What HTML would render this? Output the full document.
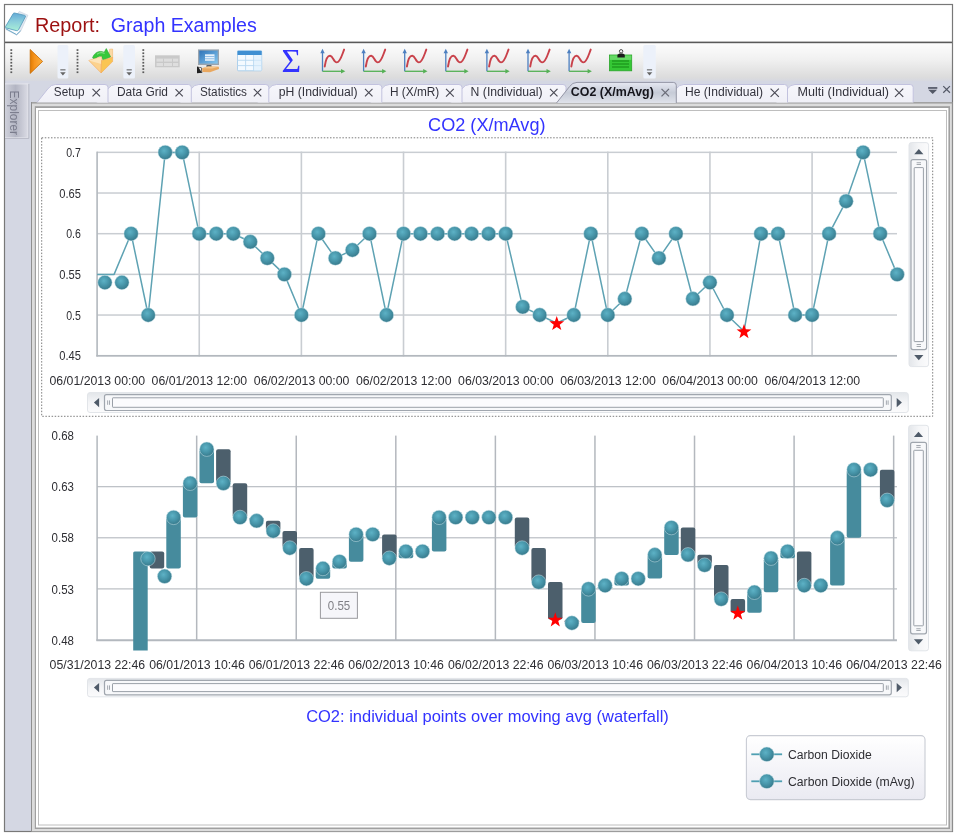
<!DOCTYPE html>
<html lang="en"><head><meta charset="utf-8"><title>Report: Graph Examples</title>
<style>
html,body{margin:0;padding:0;background:#fff;overflow:hidden}
svg{display:block;filter:blur(0.35px)}
text{font-family:"Liberation Sans",sans-serif}
</style></head><body>
<svg width="960" height="837" viewBox="0 0 960 837">
<defs>
<radialGradient id="ball" cx="0.42" cy="0.38" r="0.62"><stop offset="0" stop-color="#5db2c6"/><stop offset="0.55" stop-color="#4795a9"/><stop offset="1" stop-color="#387b8d"/></radialGradient>
<linearGradient id="tb" x1="0" y1="0" x2="0" y2="1"><stop offset="0" stop-color="#fdfdfd"/><stop offset="0.45" stop-color="#f0f0f0"/><stop offset="0.9" stop-color="#dcdcdc"/><stop offset="1" stop-color="#d6d8e0"/></linearGradient>
<linearGradient id="acttab" x1="0" y1="0" x2="0" y2="1"><stop offset="0" stop-color="#e6e8f2"/><stop offset="0.5" stop-color="#c6cbd7"/><stop offset="1" stop-color="#dfe2ea"/></linearGradient>
<linearGradient id="tab" x1="0" y1="0" x2="0" y2="1"><stop offset="0" stop-color="#f6f6fb"/><stop offset="1" stop-color="#f0f0f7"/></linearGradient>
<linearGradient id="expl" x1="0" y1="0" x2="1" y2="0"><stop offset="0" stop-color="#cfd1db"/><stop offset="0.45" stop-color="#b3b5c3"/><stop offset="1" stop-color="#dcdde6"/></linearGradient>
<linearGradient id="sbv" x1="0" y1="0" x2="1" y2="0"><stop offset="0" stop-color="#e3e6ea"/><stop offset="0.5" stop-color="#f4f5f7"/><stop offset="1" stop-color="#fbfbfc"/></linearGradient>
<linearGradient id="sbh" x1="0" y1="0" x2="0" y2="1"><stop offset="0" stop-color="#e3e6ea"/><stop offset="0.5" stop-color="#f4f5f7"/><stop offset="1" stop-color="#fbfbfc"/></linearGradient>
<linearGradient id="leg" x1="0" y1="0" x2="0" y2="1"><stop offset="0" stop-color="#ffffff"/><stop offset="1" stop-color="#eaeaf2"/></linearGradient>
<linearGradient id="play" x1="0" y1="0" x2="1" y2="0"><stop offset="0" stop-color="#e07a00"/><stop offset="0.35" stop-color="#f7941d"/><stop offset="1" stop-color="#fbb040"/></linearGradient>
<linearGradient id="mon" x1="0" y1="0" x2="1" y2="1"><stop offset="0" stop-color="#2f73b8"/><stop offset="1" stop-color="#86c8f0"/></linearGradient>
<linearGradient id="book" x1="0" y1="0" x2="0" y2="1"><stop offset="0" stop-color="#62a9d6"/><stop offset="0.5" stop-color="#8ccfdc"/><stop offset="1" stop-color="#a9efd6"/></linearGradient>
<linearGradient id="fold" x1="0" y1="0" x2="1" y2="0"><stop offset="0" stop-color="#fbc56a"/><stop offset="0.5" stop-color="#f7a531"/><stop offset="1" stop-color="#f9b95a"/></linearGradient>
</defs>
<rect x="0" y="0" width="960" height="837" fill="#fff"/>
<rect x="5" y="43" width="947" height="788" fill="#d4d7e3"/>
<rect x="5" y="5" width="947" height="37" fill="#fff"/>
<rect x="5" y="43" width="947" height="38" fill="url(#tb)"/>
<rect x="4" y="41.6" width="949" height="1.6" fill="#5a5a5a"/>
<rect x="4.5" y="4.5" width="948" height="827" fill="none" stroke="#787878" stroke-width="1.2"/>
<text x="35" y="31.5" font-size="19.6" fill="#9c1010" textLength="65" lengthAdjust="spacingAndGlyphs">Report:</text>
<text x="110.8" y="31.5" font-size="19.6" fill="#3333ff" textLength="146" lengthAdjust="spacingAndGlyphs">Graph Examples</text>
<g><path d="M19.3 11.4 L27.9 15.2 L20.8 31 L16.8 35.2 L6 29.6 Z" fill="#e3e9f1" stroke="#c4cedb" stroke-width="0.6" stroke-linejoin="round"/><path d="M5.6 28.6 L16.6 34.6 L20.6 30.8" fill="#fbfdff" stroke="#5d9fc2" stroke-width="0.9" stroke-linejoin="round"/><path d="M14.6 13 L24.9 15.4 Q25.9 15.8 25.4 16.8 L18.6 29.6 Q17.8 31 16.2 30.6 L6 27.9 Q5 27.5 5.5 26.6 L13.2 13.6 Q13.8 12.8 14.6 13 Z" fill="url(#book)" stroke="#4f97ba" stroke-width="0.8" stroke-linejoin="round"/></g>
<rect x="10.4" y="49.20" width="1.8" height="1.7" fill="#5a5a5a"/>
<rect x="10.4" y="52.37" width="1.8" height="1.7" fill="#5a5a5a"/>
<rect x="10.4" y="55.54" width="1.8" height="1.7" fill="#5a5a5a"/>
<rect x="10.4" y="58.71" width="1.8" height="1.7" fill="#5a5a5a"/>
<rect x="10.4" y="61.88" width="1.8" height="1.7" fill="#5a5a5a"/>
<rect x="10.4" y="65.05" width="1.8" height="1.7" fill="#5a5a5a"/>
<rect x="10.4" y="68.22" width="1.8" height="1.7" fill="#5a5a5a"/>
<rect x="10.4" y="71.39" width="1.8" height="1.7" fill="#5a5a5a"/>
<rect x="76.6" y="49.20" width="1.8" height="1.7" fill="#5a5a5a"/>
<rect x="76.6" y="52.37" width="1.8" height="1.7" fill="#5a5a5a"/>
<rect x="76.6" y="55.54" width="1.8" height="1.7" fill="#5a5a5a"/>
<rect x="76.6" y="58.71" width="1.8" height="1.7" fill="#5a5a5a"/>
<rect x="76.6" y="61.88" width="1.8" height="1.7" fill="#5a5a5a"/>
<rect x="76.6" y="65.05" width="1.8" height="1.7" fill="#5a5a5a"/>
<rect x="76.6" y="68.22" width="1.8" height="1.7" fill="#5a5a5a"/>
<rect x="76.6" y="71.39" width="1.8" height="1.7" fill="#5a5a5a"/>
<rect x="142.4" y="49.20" width="1.8" height="1.7" fill="#5a5a5a"/>
<rect x="142.4" y="52.37" width="1.8" height="1.7" fill="#5a5a5a"/>
<rect x="142.4" y="55.54" width="1.8" height="1.7" fill="#5a5a5a"/>
<rect x="142.4" y="58.71" width="1.8" height="1.7" fill="#5a5a5a"/>
<rect x="142.4" y="61.88" width="1.8" height="1.7" fill="#5a5a5a"/>
<rect x="142.4" y="65.05" width="1.8" height="1.7" fill="#5a5a5a"/>
<rect x="142.4" y="68.22" width="1.8" height="1.7" fill="#5a5a5a"/>
<rect x="142.4" y="71.39" width="1.8" height="1.7" fill="#5a5a5a"/>
<rect x="57.5" y="45" width="10.799999999999997" height="33.5" rx="1.5" fill="#ecf1fa"/>
<rect x="60.3" y="69.3" width="5.2" height="1.1" fill="#666"/>
<path d="M60.1 72.2 L65.7 72.2 L62.9 75.4 Z" fill="#666"/>
<rect x="123.3" y="45" width="11.700000000000003" height="33.5" rx="1.5" fill="#ecf1fa"/>
<rect x="126.6" y="69.3" width="5.2" height="1.1" fill="#666"/>
<path d="M126.4 72.2 L132.0 72.2 L129.2 75.4 Z" fill="#666"/>
<rect x="643.3" y="45" width="12.5" height="33.5" rx="1.5" fill="#ecf1fa"/>
<rect x="646.9" y="69.3" width="5.2" height="1.1" fill="#666"/>
<path d="M646.8 72.2 L652.3 72.2 L649.5 75.4 Z" fill="#666"/>
<path d="M30.2 49.5 L42.6 61.4 L30.2 73.4 Z" fill="url(#play)" stroke="#c86a00" stroke-width="0.8" stroke-linejoin="round"/>
<g><path d="M109.6 49.2 L112.6 49 L112.6 58 L109.2 57.6 Z" fill="#fbd9a4" stroke="#f3b060" stroke-width="0.5"/><path d="M92.6 58 C94 52.6 99.5 50 104.2 52.3 L106.3 48.6 L110.6 56.8 L103.2 60.6 L101.5 56.4 C99 55.6 96.5 56.8 95.6 59.6 Z" fill="#35c83a" stroke="#2fa834" stroke-width="0.6" stroke-linejoin="round"/><path d="M97 54.2 C99.5 52.4 102.5 52.4 104.6 53.6" stroke="#8be58e" stroke-width="1.1" fill="none" opacity="0.8"/><path d="M88.8 60.5 L101.5 56.8 L101.1 72.9 Z" fill="#fcd28e" stroke="#f3a85a" stroke-width="0.6" stroke-linejoin="round"/><path d="M88.8 60.5 L101.5 56.8 L101.3 64 Z" fill="#fde9c6" opacity="0.8"/><path d="M101.5 60.4 L112.6 57.4 L112.6 61.6 L101.1 72.9 Z" fill="#fac552" stroke="#f3a85a" stroke-width="0.6" stroke-linejoin="round"/></g>
<g><rect x="155" y="55.3" width="24.7" height="12" fill="#c9c9c9"/><rect x="156.5" y="58.6" width="21.7" height="3" fill="#dedede"/><rect x="156.5" y="63" width="21.7" height="3" fill="#dedede"/><rect x="163" y="58.6" width="1" height="7.4" fill="#c9c9c9"/><rect x="172" y="58.6" width="1" height="7.4" fill="#c9c9c9"/></g>
<g><rect x="198" y="49.4" width="21" height="15.6" fill="#9aa4ae"/><rect x="199.3" y="50.6" width="18.4" height="13" fill="url(#mon)"/><rect x="205" y="54.3" width="9.5" height="6.5" fill="#e6f1fb"/><rect x="205" y="56.2" width="9.5" height="0.8" fill="#7fb2e0"/><rect x="205" y="58.4" width="9.5" height="0.8" fill="#7fb2e0"/><rect x="206.5" y="65" width="5" height="2" fill="#55606a"/><path d="M202 68.2 L208 66.4 L218.8 66.8 L219 69 L210 72.3 L202.5 72 Z" fill="#e9a860"/><path d="M202 68.2 L208 66.4 L218.8 66.8 L212 68.6 Z" fill="#f6c78e"/><path d="M197 66.5 L201.5 67.5 L202.3 72.8 L197 73.3 Z" fill="#222"/><path d="M198.5 67.3 L201 68 L201.6 72.2 Z" fill="#eee"/></g>
<g><rect x="237.5" y="50.8" width="24.2" height="20" rx="1" fill="#f4faff" stroke="#9cc6e8" stroke-width="0.8"/><rect x="237.5" y="50.8" width="24.2" height="4.2" fill="#3f8fd2"/><rect x="245.2" y="55" width="0.9" height="15.8" fill="#b7d8f0"/><rect x="253.2" y="55" width="0.9" height="15.8" fill="#b7d8f0"/><rect x="237.5" y="59.8" width="24.2" height="0.9" fill="#b7d8f0"/><rect x="237.5" y="65.2" width="24.2" height="0.9" fill="#b7d8f0"/><rect x="254.1" y="55" width="7.6" height="15.8" fill="#dceefb" opacity="0.6"/></g>
<text x="281.6" y="72.4" style="font-family:'Liberation Serif',serif" font-size="33.5" fill="#3333ff" textLength="19.6" lengthAdjust="spacingAndGlyphs">Σ</text>
<g transform="translate(322.5,0)"><path d="M0 71.3 L0 52" stroke="#4c7fc0" stroke-width="1.3" fill="none"/><path d="M-2.2 53.2 L0 48.8 L2.2 53.2 Z" fill="#4c7fc0"/><path d="M0 71.3 L19.5 71.3" stroke="#55b055" stroke-width="1.3" fill="none"/><path d="M18.5 69.1 L22.8 71.3 L18.5 73.5 Z" fill="#55b055"/><path d="M2.2 66.5 C3.2 60 5 55.6 7.6 55.8 C10.6 56 11 62.3 14.2 62.4 C17.6 62.5 19.5 55 21.6 49.6" stroke="#c9414a" stroke-width="1.9" fill="none" stroke-linecap="round"/></g>
<g transform="translate(363.6,0)"><path d="M0 71.3 L0 52" stroke="#4c7fc0" stroke-width="1.3" fill="none"/><path d="M-2.2 53.2 L0 48.8 L2.2 53.2 Z" fill="#4c7fc0"/><path d="M0 71.3 L19.5 71.3" stroke="#55b055" stroke-width="1.3" fill="none"/><path d="M18.5 69.1 L22.8 71.3 L18.5 73.5 Z" fill="#55b055"/><path d="M2.2 66.5 C3.2 60 5 55.6 7.6 55.8 C10.6 56 11 62.3 14.2 62.4 C17.6 62.5 19.5 55 21.6 49.6" stroke="#c9414a" stroke-width="1.9" fill="none" stroke-linecap="round"/></g>
<g transform="translate(404.7,0)"><path d="M0 71.3 L0 52" stroke="#4c7fc0" stroke-width="1.3" fill="none"/><path d="M-2.2 53.2 L0 48.8 L2.2 53.2 Z" fill="#4c7fc0"/><path d="M0 71.3 L19.5 71.3" stroke="#55b055" stroke-width="1.3" fill="none"/><path d="M18.5 69.1 L22.8 71.3 L18.5 73.5 Z" fill="#55b055"/><path d="M2.2 66.5 C3.2 60 5 55.6 7.6 55.8 C10.6 56 11 62.3 14.2 62.4 C17.6 62.5 19.5 55 21.6 49.6" stroke="#c9414a" stroke-width="1.9" fill="none" stroke-linecap="round"/></g>
<g transform="translate(445.8,0)"><path d="M0 71.3 L0 52" stroke="#4c7fc0" stroke-width="1.3" fill="none"/><path d="M-2.2 53.2 L0 48.8 L2.2 53.2 Z" fill="#4c7fc0"/><path d="M0 71.3 L19.5 71.3" stroke="#55b055" stroke-width="1.3" fill="none"/><path d="M18.5 69.1 L22.8 71.3 L18.5 73.5 Z" fill="#55b055"/><path d="M2.2 66.5 C3.2 60 5 55.6 7.6 55.8 C10.6 56 11 62.3 14.2 62.4 C17.6 62.5 19.5 55 21.6 49.6" stroke="#c9414a" stroke-width="1.9" fill="none" stroke-linecap="round"/></g>
<g transform="translate(486.9,0)"><path d="M0 71.3 L0 52" stroke="#4c7fc0" stroke-width="1.3" fill="none"/><path d="M-2.2 53.2 L0 48.8 L2.2 53.2 Z" fill="#4c7fc0"/><path d="M0 71.3 L19.5 71.3" stroke="#55b055" stroke-width="1.3" fill="none"/><path d="M18.5 69.1 L22.8 71.3 L18.5 73.5 Z" fill="#55b055"/><path d="M2.2 66.5 C3.2 60 5 55.6 7.6 55.8 C10.6 56 11 62.3 14.2 62.4 C17.6 62.5 19.5 55 21.6 49.6" stroke="#c9414a" stroke-width="1.9" fill="none" stroke-linecap="round"/></g>
<g transform="translate(528.0,0)"><path d="M0 71.3 L0 52" stroke="#4c7fc0" stroke-width="1.3" fill="none"/><path d="M-2.2 53.2 L0 48.8 L2.2 53.2 Z" fill="#4c7fc0"/><path d="M0 71.3 L19.5 71.3" stroke="#55b055" stroke-width="1.3" fill="none"/><path d="M18.5 69.1 L22.8 71.3 L18.5 73.5 Z" fill="#55b055"/><path d="M2.2 66.5 C3.2 60 5 55.6 7.6 55.8 C10.6 56 11 62.3 14.2 62.4 C17.6 62.5 19.5 55 21.6 49.6" stroke="#c9414a" stroke-width="1.9" fill="none" stroke-linecap="round"/></g>
<g transform="translate(569.1,0)"><path d="M0 71.3 L0 52" stroke="#4c7fc0" stroke-width="1.3" fill="none"/><path d="M-2.2 53.2 L0 48.8 L2.2 53.2 Z" fill="#4c7fc0"/><path d="M0 71.3 L19.5 71.3" stroke="#55b055" stroke-width="1.3" fill="none"/><path d="M18.5 69.1 L22.8 71.3 L18.5 73.5 Z" fill="#55b055"/><path d="M2.2 66.5 C3.2 60 5 55.6 7.6 55.8 C10.6 56 11 62.3 14.2 62.4 C17.6 62.5 19.5 55 21.6 49.6" stroke="#c9414a" stroke-width="1.9" fill="none" stroke-linecap="round"/></g>
<g><rect x="609.5" y="55" width="22.2" height="15.8" fill="#35c835" stroke="#28a428" stroke-width="0.8"/><rect x="609.9" y="55.4" width="21.4" height="4.5" fill="#7be07b" opacity="0.7"/><rect x="612" y="60.3" width="17" height="1.4" fill="#1f9a1f"/><rect x="612" y="63.3" width="17" height="1.4" fill="#1f9a1f"/><rect x="612" y="66.3" width="17" height="1.4" fill="#1f9a1f"/><path d="M617.4 57.6 L617.4 54.8 L619.4 53.6 L622.8 53.6 L624.8 54.8 L624.8 57.6 Z" fill="#1a1a1a"/><circle cx="621.1" cy="51.3" r="1.7" fill="none" stroke="#333" stroke-width="0.9"/></g>
<rect x="5" y="83.5" width="23.5" height="54.6" fill="url(#expl)"/>
<path d="M5 83.9 L28.1 83.9 L28.1 137.8 L5 137.8" fill="none" stroke="#e6e7ee" stroke-width="1"/>
<path d="M28.8 84 L28.8 138.4 L5 138.4" fill="none" stroke="#aeb0bc" stroke-width="0.8"/>
<text transform="translate(10.3,90.6) rotate(90)" font-size="12.6" fill="#7a7c8c" textLength="44.4" lengthAdjust="spacingAndGlyphs">Explorer</text>
<rect x="31" y="102" width="921.5" height="729.5" fill="#a2a2a2"/>
<rect x="32" y="103.6" width="919.8" height="727.6" fill="#dcdcdc"/>
<rect x="34.8" y="106.2" width="915.2" height="722.8" fill="#a0a0a0"/>
<rect x="36" y="108" width="912.4" height="719.5" fill="#ffffff"/>
<rect x="38.5" y="110.5" width="908" height="714.5" fill="#ffffff" stroke="#bebebe" stroke-width="1"/>
<rect x="31" y="102" width="1" height="729" fill="#8f8f8f"/>
<path d="M776.5 102.4 L787.5 88.7 Q790.5 84.5 795.0 84.5 L910.2 84.5 Q913.2 84.5 913.2 87.5 L913.2 102.4 Z" fill="url(#tab)"/>
<path d="M776.5 102.4 L787.5 88.7 Q790.5 84.5 795.0 84.5 L910.2 84.5 Q913.2 84.5 913.2 87.5 L913.2 102.4" fill="none" stroke="#c2c2de" stroke-width="1"/>
<text x="797.5" y="96.3" font-size="12" fill="#33333d" textLength="91.5" lengthAdjust="spacingAndGlyphs">Multi (Individual)</text>
<path d="M894.96 88.56 L903.24 96.84 M903.24 88.56 L894.96 96.84" stroke="#4a4a55" stroke-width="1.15" fill="none"/>
<path d="M665.3 102.4 L676.3 88.7 Q679.3 84.5 683.8 84.5 L784.5 84.5 Q787.5 84.5 787.5 87.5 L787.5 102.4 Z" fill="url(#tab)"/>
<path d="M665.3 102.4 L676.3 88.7 Q679.3 84.5 683.8 84.5 L784.5 84.5 Q787.5 84.5 787.5 87.5 L787.5 102.4" fill="none" stroke="#c2c2de" stroke-width="1"/>
<text x="685" y="96.3" font-size="12" fill="#33333d" textLength="78" lengthAdjust="spacingAndGlyphs">He (Individual)</text>
<path d="M770.56 88.56 L778.84 96.84 M778.84 88.56 L770.56 96.84" stroke="#4a4a55" stroke-width="1.15" fill="none"/>
<path d="M451.0 102.4 L462.0 88.7 Q465.0 84.5 469.5 84.5 L563.0 84.5 Q566.0 84.5 566.0 87.5 L566.0 102.4 Z" fill="url(#tab)"/>
<path d="M451.0 102.4 L462.0 88.7 Q465.0 84.5 469.5 84.5 L563.0 84.5 Q566.0 84.5 566.0 87.5 L566.0 102.4" fill="none" stroke="#c2c2de" stroke-width="1"/>
<text x="470.6" y="96.3" font-size="12" fill="#33333d" textLength="72" lengthAdjust="spacingAndGlyphs">N (Individual)</text>
<path d="M550.01 88.96 L557.49 96.44 M557.49 88.96 L550.01 96.44" stroke="#4a4a55" stroke-width="1.15" fill="none"/>
<path d="M370.8 102.4 L381.8 88.7 Q384.8 84.5 389.3 84.5 L459.0 84.5 Q462.0 84.5 462.0 87.5 L462.0 102.4 Z" fill="url(#tab)"/>
<path d="M370.8 102.4 L381.8 88.7 Q384.8 84.5 389.3 84.5 L459.0 84.5 Q462.0 84.5 462.0 87.5 L462.0 102.4" fill="none" stroke="#c2c2de" stroke-width="1"/>
<text x="390" y="96.3" font-size="12" fill="#33333d" textLength="49.3" lengthAdjust="spacingAndGlyphs">H (X/mR)</text>
<path d="M446.03 88.83 L453.77 96.57 M453.77 88.83 L446.03 96.57" stroke="#4a4a55" stroke-width="1.15" fill="none"/>
<path d="M257.8 102.4 L268.8 88.7 Q271.8 84.5 276.3 84.5 L378.8 84.5 Q381.8 84.5 381.8 87.5 L381.8 102.4 Z" fill="url(#tab)"/>
<path d="M257.8 102.4 L268.8 88.7 Q271.8 84.5 276.3 84.5 L378.8 84.5 Q381.8 84.5 381.8 87.5 L381.8 102.4" fill="none" stroke="#c2c2de" stroke-width="1"/>
<text x="278.8" y="96.3" font-size="12" fill="#33333d" textLength="78.7" lengthAdjust="spacingAndGlyphs">pH (Individual)</text>
<path d="M365.01 88.96 L372.49 96.44 M372.49 88.96 L365.01 96.44" stroke="#4a4a55" stroke-width="1.15" fill="none"/>
<path d="M180.3 102.4 L191.3 88.7 Q194.3 84.5 198.8 84.5 L265.8 84.5 Q268.8 84.5 268.8 87.5 L268.8 102.4 Z" fill="url(#tab)"/>
<path d="M180.3 102.4 L191.3 88.7 Q194.3 84.5 198.8 84.5 L265.8 84.5 Q268.8 84.5 268.8 87.5 L268.8 102.4" fill="none" stroke="#c2c2de" stroke-width="1"/>
<text x="200" y="96.3" font-size="12" fill="#33333d" textLength="47" lengthAdjust="spacingAndGlyphs">Statistics</text>
<path d="M253.81 88.96 L261.29 96.44 M261.29 88.96 L253.81 96.44" stroke="#4a4a55" stroke-width="1.15" fill="none"/>
<path d="M97.0 102.4 L108.0 88.7 Q111.0 84.5 115.5 84.5 L188.3 84.5 Q191.3 84.5 191.3 87.5 L191.3 102.4 Z" fill="url(#tab)"/>
<path d="M97.0 102.4 L108.0 88.7 Q111.0 84.5 115.5 84.5 L188.3 84.5 Q191.3 84.5 191.3 87.5 L191.3 102.4" fill="none" stroke="#c2c2de" stroke-width="1"/>
<text x="117" y="96.3" font-size="12" fill="#33333d" textLength="51" lengthAdjust="spacingAndGlyphs">Data Grid</text>
<path d="M175.50 89.05 L182.80 96.35 M182.80 89.05 L175.50 96.35" stroke="#4a4a55" stroke-width="1.15" fill="none"/>
<path d="M37.0 102.4 L48.0 88.7 Q51.0 84.5 55.5 84.5 L105.0 84.5 Q108.0 84.5 108.0 87.5 L108.0 102.4 Z" fill="url(#tab)"/>
<path d="M37.0 102.4 L48.0 88.7 Q51.0 84.5 55.5 84.5 L105.0 84.5 Q108.0 84.5 108.0 87.5 L108.0 102.4" fill="none" stroke="#c2c2de" stroke-width="1"/>
<text x="53.8" y="96.3" font-size="12" fill="#33333d" textLength="30.7" lengthAdjust="spacingAndGlyphs">Setup</text>
<path d="M92.51 88.96 L99.99 96.44 M99.99 88.96 L92.51 96.44" stroke="#4a4a55" stroke-width="1.15" fill="none"/>
<path d="M556.5 103 L569.5 86.6 Q572.5 82.4 577.0 82.4 L673.3 82.4 Q676.3 82.4 676.3 85.4 L676.3 103 Z" fill="url(#acttab)"/>
<path d="M556.5 103 L569.5 86.6 Q572.5 82.4 577.0 82.4 L673.3 82.4 Q676.3 82.4 676.3 85.4 L676.3 103" fill="none" stroke="#9496a6" stroke-width="1"/>
<text x="570.8" y="96.3" font-size="12.2" font-weight="700" fill="#15151c" textLength="83" lengthAdjust="spacingAndGlyphs">CO2 (X/mAvg)</text>
<path d="M661.51 88.86 L668.99 96.34 M668.99 88.86 L661.51 96.34" stroke="#6a6c78" stroke-width="1.3" fill="none"/>
<rect x="928.1" y="87.1" width="9.2" height="1.7" fill="#535866"/><path d="M928.3 89.8 L937.1 89.8 L932.7 94.1 Z" fill="#535866"/>
<path d="M943.26 86.06 L949.94 92.74 M949.94 86.06 L943.26 92.74" stroke="#535866" stroke-width="1.2" fill="none"/>
<rect x="41.7" y="137.8" width="891" height="278.5" fill="none" stroke="#7d7d7d" stroke-width="1" stroke-dasharray="1.5 1.6"/>
<text x="486.8" y="130.5" font-size="18.4" fill="#3333ff" text-anchor="middle" textLength="117.4" lengthAdjust="spacingAndGlyphs">CO2 (X/mAvg)</text>
<rect x="97.1" y="151.60" width="799.9" height="1.5" fill="#c9cdd2"/>
<rect x="97.1" y="192.27" width="799.9" height="1.5" fill="#c9cdd2"/>
<rect x="97.1" y="232.94" width="799.9" height="1.5" fill="#c9cdd2"/>
<rect x="97.1" y="273.61" width="799.9" height="1.5" fill="#c9cdd2"/>
<rect x="97.1" y="314.28" width="799.9" height="1.5" fill="#c9cdd2"/>
<rect x="96.30" y="151.60" width="1.6" height="204.85" fill="#b3b8be"/>
<rect x="198.44" y="151.60" width="1.6" height="204.85" fill="#c9cdd2"/>
<rect x="300.58" y="151.60" width="1.6" height="204.85" fill="#c9cdd2"/>
<rect x="402.72" y="151.60" width="1.6" height="204.85" fill="#c9cdd2"/>
<rect x="504.86" y="151.60" width="1.6" height="204.85" fill="#c9cdd2"/>
<rect x="607.00" y="151.60" width="1.6" height="204.85" fill="#c9cdd2"/>
<rect x="709.14" y="151.60" width="1.6" height="204.85" fill="#c9cdd2"/>
<rect x="811.28" y="151.60" width="1.6" height="204.85" fill="#c9cdd2"/>
<rect x="96.3" y="354.95" width="800.7" height="1.75" fill="#b3b8be"/>
<text x="80.9" y="156.9" font-size="12.3" fill="#2e2e33" text-anchor="end" textLength="14.7" lengthAdjust="spacingAndGlyphs">0.7</text>
<text x="80.9" y="197.5" font-size="12.3" fill="#2e2e33" text-anchor="end" textLength="21.7" lengthAdjust="spacingAndGlyphs">0.65</text>
<text x="80.9" y="238.2" font-size="12.3" fill="#2e2e33" text-anchor="end" textLength="14.7" lengthAdjust="spacingAndGlyphs">0.6</text>
<text x="80.9" y="278.9" font-size="12.3" fill="#2e2e33" text-anchor="end" textLength="21.7" lengthAdjust="spacingAndGlyphs">0.55</text>
<text x="80.9" y="319.5" font-size="12.3" fill="#2e2e33" text-anchor="end" textLength="14.7" lengthAdjust="spacingAndGlyphs">0.5</text>
<text x="80.9" y="360.2" font-size="12.3" fill="#2e2e33" text-anchor="end" textLength="21.7" lengthAdjust="spacingAndGlyphs">0.45</text>
<text x="97.3" y="384.9" font-size="12.3" fill="#2e2e33" text-anchor="middle" textLength="95.6" lengthAdjust="spacingAndGlyphs">06/01/2013 00:00</text>
<text x="199.4" y="384.9" font-size="12.3" fill="#2e2e33" text-anchor="middle" textLength="95.6" lengthAdjust="spacingAndGlyphs">06/01/2013 12:00</text>
<text x="301.6" y="384.9" font-size="12.3" fill="#2e2e33" text-anchor="middle" textLength="95.6" lengthAdjust="spacingAndGlyphs">06/02/2013 00:00</text>
<text x="403.7" y="384.9" font-size="12.3" fill="#2e2e33" text-anchor="middle" textLength="95.6" lengthAdjust="spacingAndGlyphs">06/02/2013 12:00</text>
<text x="505.9" y="384.9" font-size="12.3" fill="#2e2e33" text-anchor="middle" textLength="95.6" lengthAdjust="spacingAndGlyphs">06/03/2013 00:00</text>
<text x="608.0" y="384.9" font-size="12.3" fill="#2e2e33" text-anchor="middle" textLength="95.6" lengthAdjust="spacingAndGlyphs">06/03/2013 12:00</text>
<text x="710.1" y="384.9" font-size="12.3" fill="#2e2e33" text-anchor="middle" textLength="95.6" lengthAdjust="spacingAndGlyphs">06/04/2013 00:00</text>
<text x="812.3" y="384.9" font-size="12.3" fill="#2e2e33" text-anchor="middle" textLength="95.6" lengthAdjust="spacingAndGlyphs">06/04/2013 12:00</text>
<polyline points="97.1,274.4 114.1,274.4 131.1,233.7 148.2,315.0 165.2,152.4 182.2,152.4 199.2,233.7 216.3,233.7 233.3,233.7 250.3,241.8 267.3,258.1 284.4,274.4 301.4,315.0 318.4,233.7 335.4,258.1 352.4,250.0 369.5,233.7 386.5,315.0 403.5,233.7 420.5,233.7 437.6,233.7 454.6,233.7 471.6,233.7 488.6,233.7 505.7,233.7 522.7,306.9 539.7,315.0 556.7,323.2 573.8,315.0 590.8,233.7 607.8,315.0 624.8,298.8 641.8,233.7 658.9,258.1 675.9,233.7 692.9,298.8 709.9,282.5 727.0,315.0 744.0,331.3 761.0,233.7 778.0,233.7 795.1,315.0 812.1,315.0 829.1,233.7 846.1,201.2 863.1,152.4 880.2,233.7 897.2,274.4" fill="none" stroke="#5ea2b3" stroke-width="1.5" stroke-linejoin="round"/>
<circle cx="104.9" cy="282.5" r="7.2" fill="url(#ball)" stroke="#cfe6ec" stroke-opacity="0.55" stroke-width="0.9"/>
<circle cx="121.9" cy="282.5" r="7.2" fill="url(#ball)" stroke="#cfe6ec" stroke-opacity="0.55" stroke-width="0.9"/>
<circle cx="131.1" cy="233.7" r="7.2" fill="url(#ball)" stroke="#cfe6ec" stroke-opacity="0.55" stroke-width="0.9"/>
<circle cx="148.2" cy="315.0" r="7.2" fill="url(#ball)" stroke="#cfe6ec" stroke-opacity="0.55" stroke-width="0.9"/>
<circle cx="165.2" cy="152.4" r="7.2" fill="url(#ball)" stroke="#cfe6ec" stroke-opacity="0.55" stroke-width="0.9"/>
<circle cx="182.2" cy="152.4" r="7.2" fill="url(#ball)" stroke="#cfe6ec" stroke-opacity="0.55" stroke-width="0.9"/>
<circle cx="199.2" cy="233.7" r="7.2" fill="url(#ball)" stroke="#cfe6ec" stroke-opacity="0.55" stroke-width="0.9"/>
<circle cx="216.3" cy="233.7" r="7.2" fill="url(#ball)" stroke="#cfe6ec" stroke-opacity="0.55" stroke-width="0.9"/>
<circle cx="233.3" cy="233.7" r="7.2" fill="url(#ball)" stroke="#cfe6ec" stroke-opacity="0.55" stroke-width="0.9"/>
<circle cx="250.3" cy="241.8" r="7.2" fill="url(#ball)" stroke="#cfe6ec" stroke-opacity="0.55" stroke-width="0.9"/>
<circle cx="267.3" cy="258.1" r="7.2" fill="url(#ball)" stroke="#cfe6ec" stroke-opacity="0.55" stroke-width="0.9"/>
<circle cx="284.4" cy="274.4" r="7.2" fill="url(#ball)" stroke="#cfe6ec" stroke-opacity="0.55" stroke-width="0.9"/>
<circle cx="301.4" cy="315.0" r="7.2" fill="url(#ball)" stroke="#cfe6ec" stroke-opacity="0.55" stroke-width="0.9"/>
<circle cx="318.4" cy="233.7" r="7.2" fill="url(#ball)" stroke="#cfe6ec" stroke-opacity="0.55" stroke-width="0.9"/>
<circle cx="335.4" cy="258.1" r="7.2" fill="url(#ball)" stroke="#cfe6ec" stroke-opacity="0.55" stroke-width="0.9"/>
<circle cx="352.4" cy="250.0" r="7.2" fill="url(#ball)" stroke="#cfe6ec" stroke-opacity="0.55" stroke-width="0.9"/>
<circle cx="369.5" cy="233.7" r="7.2" fill="url(#ball)" stroke="#cfe6ec" stroke-opacity="0.55" stroke-width="0.9"/>
<circle cx="386.5" cy="315.0" r="7.2" fill="url(#ball)" stroke="#cfe6ec" stroke-opacity="0.55" stroke-width="0.9"/>
<circle cx="403.5" cy="233.7" r="7.2" fill="url(#ball)" stroke="#cfe6ec" stroke-opacity="0.55" stroke-width="0.9"/>
<circle cx="420.5" cy="233.7" r="7.2" fill="url(#ball)" stroke="#cfe6ec" stroke-opacity="0.55" stroke-width="0.9"/>
<circle cx="437.6" cy="233.7" r="7.2" fill="url(#ball)" stroke="#cfe6ec" stroke-opacity="0.55" stroke-width="0.9"/>
<circle cx="454.6" cy="233.7" r="7.2" fill="url(#ball)" stroke="#cfe6ec" stroke-opacity="0.55" stroke-width="0.9"/>
<circle cx="471.6" cy="233.7" r="7.2" fill="url(#ball)" stroke="#cfe6ec" stroke-opacity="0.55" stroke-width="0.9"/>
<circle cx="488.6" cy="233.7" r="7.2" fill="url(#ball)" stroke="#cfe6ec" stroke-opacity="0.55" stroke-width="0.9"/>
<circle cx="505.7" cy="233.7" r="7.2" fill="url(#ball)" stroke="#cfe6ec" stroke-opacity="0.55" stroke-width="0.9"/>
<circle cx="522.7" cy="306.9" r="7.2" fill="url(#ball)" stroke="#cfe6ec" stroke-opacity="0.55" stroke-width="0.9"/>
<circle cx="539.7" cy="315.0" r="7.2" fill="url(#ball)" stroke="#cfe6ec" stroke-opacity="0.55" stroke-width="0.9"/>
<polygon points="556.73,315.96 558.56,321.24 564.15,321.35 559.70,324.73 561.31,330.07 556.73,326.88 552.15,330.07 553.76,324.73 549.31,321.35 554.90,321.24" fill="#ff0000"/>
<circle cx="573.8" cy="315.0" r="7.2" fill="url(#ball)" stroke="#cfe6ec" stroke-opacity="0.55" stroke-width="0.9"/>
<circle cx="590.8" cy="233.7" r="7.2" fill="url(#ball)" stroke="#cfe6ec" stroke-opacity="0.55" stroke-width="0.9"/>
<circle cx="607.8" cy="315.0" r="7.2" fill="url(#ball)" stroke="#cfe6ec" stroke-opacity="0.55" stroke-width="0.9"/>
<circle cx="624.8" cy="298.8" r="7.2" fill="url(#ball)" stroke="#cfe6ec" stroke-opacity="0.55" stroke-width="0.9"/>
<circle cx="641.8" cy="233.7" r="7.2" fill="url(#ball)" stroke="#cfe6ec" stroke-opacity="0.55" stroke-width="0.9"/>
<circle cx="658.9" cy="258.1" r="7.2" fill="url(#ball)" stroke="#cfe6ec" stroke-opacity="0.55" stroke-width="0.9"/>
<circle cx="675.9" cy="233.7" r="7.2" fill="url(#ball)" stroke="#cfe6ec" stroke-opacity="0.55" stroke-width="0.9"/>
<circle cx="692.9" cy="298.8" r="7.2" fill="url(#ball)" stroke="#cfe6ec" stroke-opacity="0.55" stroke-width="0.9"/>
<circle cx="709.9" cy="282.5" r="7.2" fill="url(#ball)" stroke="#cfe6ec" stroke-opacity="0.55" stroke-width="0.9"/>
<circle cx="727.0" cy="315.0" r="7.2" fill="url(#ball)" stroke="#cfe6ec" stroke-opacity="0.55" stroke-width="0.9"/>
<polygon points="743.99,324.10 745.82,329.37 751.40,329.49 746.95,332.86 748.57,338.21 743.99,335.02 739.40,338.21 741.02,332.86 736.57,329.49 742.15,329.37" fill="#ff0000"/>
<circle cx="761.0" cy="233.7" r="7.2" fill="url(#ball)" stroke="#cfe6ec" stroke-opacity="0.55" stroke-width="0.9"/>
<circle cx="778.0" cy="233.7" r="7.2" fill="url(#ball)" stroke="#cfe6ec" stroke-opacity="0.55" stroke-width="0.9"/>
<circle cx="795.1" cy="315.0" r="7.2" fill="url(#ball)" stroke="#cfe6ec" stroke-opacity="0.55" stroke-width="0.9"/>
<circle cx="812.1" cy="315.0" r="7.2" fill="url(#ball)" stroke="#cfe6ec" stroke-opacity="0.55" stroke-width="0.9"/>
<circle cx="829.1" cy="233.7" r="7.2" fill="url(#ball)" stroke="#cfe6ec" stroke-opacity="0.55" stroke-width="0.9"/>
<circle cx="846.1" cy="201.2" r="7.2" fill="url(#ball)" stroke="#cfe6ec" stroke-opacity="0.55" stroke-width="0.9"/>
<circle cx="863.1" cy="152.4" r="7.2" fill="url(#ball)" stroke="#cfe6ec" stroke-opacity="0.55" stroke-width="0.9"/>
<circle cx="880.2" cy="233.7" r="7.2" fill="url(#ball)" stroke="#cfe6ec" stroke-opacity="0.55" stroke-width="0.9"/>
<circle cx="897.2" cy="274.4" r="7.2" fill="url(#ball)" stroke="#cfe6ec" stroke-opacity="0.55" stroke-width="0.9"/>
<rect x="909" y="142.6" width="19.600000000000023" height="224.00000000000003" rx="2.5" fill="url(#sbv)" stroke="#e2e5e9" stroke-width="1"/>
<path d="M914.2 154.2 L923.4 154.2 L918.8 149.0 Z" fill="#4f5b69"/>
<path d="M914.2 355.0 L923.4 355.0 L918.8 360.2 Z" fill="#4f5b69"/>
<rect x="911" y="159.6" width="15.600000000000023" height="190.00000000000003" rx="2" fill="#f7f8fa" stroke="#a0a6ae" stroke-width="1.2"/>
<rect x="914.2" y="167.6" width="9.200000000000022" height="174.00000000000003" rx="0.5" fill="#fbfbfd" stroke="#9aa0a8" stroke-width="1"/>
<rect x="916.6" y="162.4" width="4.4" height="0.8" fill="#8f959d"/>
<rect x="916.6" y="164.2" width="4.4" height="0.8" fill="#8f959d"/>
<rect x="916.6" y="344.2" width="4.4" height="0.8" fill="#8f959d"/>
<rect x="916.6" y="346.0" width="4.4" height="0.8" fill="#8f959d"/>
<rect x="87.5" y="392.6" width="820.8" height="19.899999999999977" rx="2.5" fill="url(#sbh)" stroke="#e2e5e9" stroke-width="1"/>
<path d="M99.1 397.9 L99.1 407.2 L93.9 402.6 Z" fill="#4f5b69"/>
<path d="M896.7 397.9 L896.7 407.2 L901.9 402.6 Z" fill="#4f5b69"/>
<rect x="104.5" y="394.6" width="786.8" height="15.899999999999977" rx="2" fill="#f7f8fa" stroke="#a0a6ae" stroke-width="1.2"/>
<rect x="112.5" y="397.8" width="770.8" height="9.499999999999977" rx="0.5" fill="#fbfbfd" stroke="#9aa0a8" stroke-width="1"/>
<rect x="107.3" y="400.4" width="0.8" height="4.4" fill="#8f959d"/>
<rect x="109.1" y="400.4" width="0.8" height="4.4" fill="#8f959d"/>
<rect x="885.9" y="400.4" width="0.8" height="4.4" fill="#8f959d"/>
<rect x="887.7" y="400.4" width="0.8" height="4.4" fill="#8f959d"/>
<rect x="97.1" y="486.15" width="799.9" height="1.1" fill="#b4b8be"/>
<rect x="97.1" y="537.25" width="799.9" height="1.1" fill="#b4b8be"/>
<rect x="97.1" y="588.35" width="799.9" height="1.1" fill="#b4b8be"/>
<rect x="96.35" y="435.60" width="1.5" height="205.10" fill="#b3b8be"/>
<rect x="195.92" y="435.60" width="1.5" height="205.10" fill="#b4b8be"/>
<rect x="295.49" y="435.60" width="1.5" height="205.10" fill="#b4b8be"/>
<rect x="395.06" y="435.60" width="1.5" height="205.10" fill="#b4b8be"/>
<rect x="494.63" y="435.60" width="1.5" height="205.10" fill="#b4b8be"/>
<rect x="594.20" y="435.60" width="1.5" height="205.10" fill="#b4b8be"/>
<rect x="693.77" y="435.60" width="1.5" height="205.10" fill="#b4b8be"/>
<rect x="793.34" y="435.60" width="1.5" height="205.10" fill="#b4b8be"/>
<rect x="892.91" y="435.60" width="1.5" height="205.10" fill="#b4b8be"/>
<rect x="96.35" y="639.25" width="800.6" height="2" fill="#b3b8be"/>
<text x="73.9" y="440.2" font-size="12.3" fill="#2e2e33" text-anchor="end" textLength="22.3" lengthAdjust="spacingAndGlyphs">0.68</text>
<text x="73.9" y="491.3" font-size="12.3" fill="#2e2e33" text-anchor="end" textLength="22.3" lengthAdjust="spacingAndGlyphs">0.63</text>
<text x="73.9" y="542.4" font-size="12.3" fill="#2e2e33" text-anchor="end" textLength="22.3" lengthAdjust="spacingAndGlyphs">0.58</text>
<text x="73.9" y="593.5" font-size="12.3" fill="#2e2e33" text-anchor="end" textLength="22.3" lengthAdjust="spacingAndGlyphs">0.53</text>
<text x="73.9" y="644.6" font-size="12.3" fill="#2e2e33" text-anchor="end" textLength="22.3" lengthAdjust="spacingAndGlyphs">0.48</text>
<text x="97.4" y="669.2" font-size="12.3" fill="#2e2e33" text-anchor="middle" textLength="95.6" lengthAdjust="spacingAndGlyphs">05/31/2013 22:46</text>
<text x="197.0" y="669.2" font-size="12.3" fill="#2e2e33" text-anchor="middle" textLength="95.6" lengthAdjust="spacingAndGlyphs">06/01/2013 10:46</text>
<text x="296.5" y="669.2" font-size="12.3" fill="#2e2e33" text-anchor="middle" textLength="95.6" lengthAdjust="spacingAndGlyphs">06/01/2013 22:46</text>
<text x="396.1" y="669.2" font-size="12.3" fill="#2e2e33" text-anchor="middle" textLength="95.6" lengthAdjust="spacingAndGlyphs">06/02/2013 10:46</text>
<text x="495.7" y="669.2" font-size="12.3" fill="#2e2e33" text-anchor="middle" textLength="95.6" lengthAdjust="spacingAndGlyphs">06/02/2013 22:46</text>
<text x="595.2" y="669.2" font-size="12.3" fill="#2e2e33" text-anchor="middle" textLength="95.6" lengthAdjust="spacingAndGlyphs">06/03/2013 10:46</text>
<text x="694.8" y="669.2" font-size="12.3" fill="#2e2e33" text-anchor="middle" textLength="95.6" lengthAdjust="spacingAndGlyphs">06/03/2013 22:46</text>
<text x="794.4" y="669.2" font-size="12.3" fill="#2e2e33" text-anchor="middle" textLength="95.6" lengthAdjust="spacingAndGlyphs">06/04/2013 10:46</text>
<text x="894.0" y="669.2" font-size="12.3" fill="#2e2e33" text-anchor="middle" textLength="95.6" lengthAdjust="spacingAndGlyphs">06/04/2013 22:46</text>
<path d="M133.2 650.4 L133.2 552.9 Q133.2 551.4 134.7 551.4 L147.7 551.4 L147.7 650.4 Z" fill="#468b9d"/>
<rect x="149.7" y="551.4" width="14.5" height="17.0" rx="2.0" fill="#4c5f6c"/>
<rect x="166.3" y="517.4" width="14.5" height="51.1" rx="2.0" fill="#468b9d"/>
<rect x="182.9" y="483.3" width="14.5" height="34.1" rx="2.0" fill="#468b9d"/>
<rect x="199.5" y="449.2" width="14.5" height="34.1" rx="2.0" fill="#468b9d"/>
<rect x="216.1" y="449.2" width="14.5" height="34.1" rx="2.0" fill="#4c5f6c"/>
<rect x="232.7" y="483.3" width="14.5" height="34.1" rx="2.0" fill="#4c5f6c"/>
<rect x="249.3" y="517.4" width="14.5" height="3.4" rx="1.7" fill="#4c5f6c"/>
<rect x="265.9" y="520.8" width="14.5" height="10.2" rx="2.0" fill="#4c5f6c"/>
<rect x="282.5" y="531.0" width="14.5" height="17.0" rx="2.0" fill="#4c5f6c"/>
<rect x="299.1" y="548.0" width="14.5" height="30.7" rx="2.0" fill="#4c5f6c"/>
<rect x="315.7" y="568.5" width="14.5" height="10.2" rx="2.0" fill="#468b9d"/>
<rect x="332.3" y="561.6" width="14.5" height="6.8" rx="2.0" fill="#468b9d"/>
<rect x="348.9" y="534.4" width="14.5" height="27.3" rx="2.0" fill="#468b9d"/>
<rect x="382.1" y="534.4" width="14.5" height="23.8" rx="2.0" fill="#4c5f6c"/>
<rect x="398.7" y="551.4" width="14.5" height="6.8" rx="2.0" fill="#468b9d"/>
<rect x="431.9" y="517.4" width="14.5" height="34.1" rx="2.0" fill="#468b9d"/>
<rect x="514.8" y="517.4" width="14.5" height="30.7" rx="2.0" fill="#4c5f6c"/>
<rect x="531.4" y="548.0" width="14.5" height="34.1" rx="2.0" fill="#4c5f6c"/>
<rect x="548.0" y="582.1" width="14.5" height="37.5" rx="2.0" fill="#4c5f6c"/>
<rect x="564.6" y="619.6" width="14.5" height="3.4" rx="1.7" fill="#4c5f6c"/>
<rect x="581.2" y="588.9" width="14.5" height="34.1" rx="2.0" fill="#468b9d"/>
<rect x="597.8" y="585.5" width="14.5" height="3.4" rx="1.7" fill="#468b9d"/>
<rect x="614.4" y="578.7" width="14.5" height="6.8" rx="2.0" fill="#468b9d"/>
<rect x="647.6" y="554.8" width="14.5" height="23.8" rx="2.0" fill="#468b9d"/>
<rect x="664.2" y="527.6" width="14.5" height="27.3" rx="2.0" fill="#468b9d"/>
<rect x="680.8" y="527.6" width="14.5" height="27.3" rx="2.0" fill="#4c5f6c"/>
<rect x="697.4" y="554.8" width="14.5" height="10.2" rx="2.0" fill="#4c5f6c"/>
<rect x="714.0" y="565.1" width="14.5" height="34.1" rx="2.0" fill="#4c5f6c"/>
<rect x="730.6" y="599.1" width="14.5" height="13.6" rx="2.0" fill="#4c5f6c"/>
<rect x="747.2" y="592.3" width="14.5" height="20.4" rx="2.0" fill="#468b9d"/>
<rect x="763.8" y="558.2" width="14.5" height="34.1" rx="2.0" fill="#468b9d"/>
<rect x="780.4" y="551.4" width="14.5" height="6.8" rx="2.0" fill="#468b9d"/>
<rect x="796.9" y="551.4" width="14.5" height="34.1" rx="2.0" fill="#4c5f6c"/>
<rect x="830.1" y="537.8" width="14.5" height="47.7" rx="2.0" fill="#468b9d"/>
<rect x="846.7" y="469.7" width="14.5" height="68.1" rx="2.0" fill="#468b9d"/>
<rect x="879.9" y="469.7" width="14.5" height="30.7" rx="2.0" fill="#4c5f6c"/>
<circle cx="148.0" cy="558.7" r="7.2" fill="url(#ball)" stroke="#cfe6ec" stroke-opacity="0.55" stroke-width="0.9"/>
<circle cx="164.6" cy="576.3" r="7.2" fill="url(#ball)" stroke="#cfe6ec" stroke-opacity="0.55" stroke-width="0.9"/>
<circle cx="173.6" cy="517.4" r="7.2" fill="url(#ball)" stroke="#cfe6ec" stroke-opacity="0.55" stroke-width="0.9"/>
<circle cx="190.2" cy="483.3" r="7.2" fill="url(#ball)" stroke="#cfe6ec" stroke-opacity="0.55" stroke-width="0.9"/>
<circle cx="206.8" cy="449.2" r="7.2" fill="url(#ball)" stroke="#cfe6ec" stroke-opacity="0.55" stroke-width="0.9"/>
<circle cx="223.4" cy="483.3" r="7.2" fill="url(#ball)" stroke="#cfe6ec" stroke-opacity="0.55" stroke-width="0.9"/>
<circle cx="240.0" cy="517.4" r="7.2" fill="url(#ball)" stroke="#cfe6ec" stroke-opacity="0.55" stroke-width="0.9"/>
<circle cx="256.6" cy="520.8" r="7.2" fill="url(#ball)" stroke="#cfe6ec" stroke-opacity="0.55" stroke-width="0.9"/>
<circle cx="273.2" cy="531.0" r="7.2" fill="url(#ball)" stroke="#cfe6ec" stroke-opacity="0.55" stroke-width="0.9"/>
<circle cx="289.8" cy="548.0" r="7.2" fill="url(#ball)" stroke="#cfe6ec" stroke-opacity="0.55" stroke-width="0.9"/>
<circle cx="306.4" cy="578.7" r="7.2" fill="url(#ball)" stroke="#cfe6ec" stroke-opacity="0.55" stroke-width="0.9"/>
<circle cx="322.9" cy="568.5" r="7.2" fill="url(#ball)" stroke="#cfe6ec" stroke-opacity="0.55" stroke-width="0.9"/>
<circle cx="339.5" cy="561.6" r="7.2" fill="url(#ball)" stroke="#cfe6ec" stroke-opacity="0.55" stroke-width="0.9"/>
<circle cx="356.1" cy="534.4" r="7.2" fill="url(#ball)" stroke="#cfe6ec" stroke-opacity="0.55" stroke-width="0.9"/>
<circle cx="372.7" cy="534.4" r="7.2" fill="url(#ball)" stroke="#cfe6ec" stroke-opacity="0.55" stroke-width="0.9"/>
<circle cx="389.3" cy="558.2" r="7.2" fill="url(#ball)" stroke="#cfe6ec" stroke-opacity="0.55" stroke-width="0.9"/>
<circle cx="405.9" cy="551.4" r="7.2" fill="url(#ball)" stroke="#cfe6ec" stroke-opacity="0.55" stroke-width="0.9"/>
<circle cx="422.5" cy="551.4" r="7.2" fill="url(#ball)" stroke="#cfe6ec" stroke-opacity="0.55" stroke-width="0.9"/>
<circle cx="439.1" cy="517.4" r="7.2" fill="url(#ball)" stroke="#cfe6ec" stroke-opacity="0.55" stroke-width="0.9"/>
<circle cx="455.7" cy="517.4" r="7.2" fill="url(#ball)" stroke="#cfe6ec" stroke-opacity="0.55" stroke-width="0.9"/>
<circle cx="472.3" cy="517.4" r="7.2" fill="url(#ball)" stroke="#cfe6ec" stroke-opacity="0.55" stroke-width="0.9"/>
<circle cx="488.9" cy="517.4" r="7.2" fill="url(#ball)" stroke="#cfe6ec" stroke-opacity="0.55" stroke-width="0.9"/>
<circle cx="505.5" cy="517.4" r="7.2" fill="url(#ball)" stroke="#cfe6ec" stroke-opacity="0.55" stroke-width="0.9"/>
<circle cx="522.1" cy="548.0" r="7.2" fill="url(#ball)" stroke="#cfe6ec" stroke-opacity="0.55" stroke-width="0.9"/>
<circle cx="538.7" cy="582.1" r="7.2" fill="url(#ball)" stroke="#cfe6ec" stroke-opacity="0.55" stroke-width="0.9"/>
<polygon points="555.27,612.36 557.11,617.64 562.69,617.75 558.24,621.12 559.86,626.47 555.27,623.28 550.69,626.47 552.31,621.12 547.86,617.75 553.44,617.64" fill="#ff0000"/>
<circle cx="571.9" cy="623.0" r="7.2" fill="url(#ball)" stroke="#cfe6ec" stroke-opacity="0.55" stroke-width="0.9"/>
<circle cx="588.5" cy="588.9" r="7.2" fill="url(#ball)" stroke="#cfe6ec" stroke-opacity="0.55" stroke-width="0.9"/>
<circle cx="605.1" cy="585.5" r="7.2" fill="url(#ball)" stroke="#cfe6ec" stroke-opacity="0.55" stroke-width="0.9"/>
<circle cx="621.7" cy="578.7" r="7.2" fill="url(#ball)" stroke="#cfe6ec" stroke-opacity="0.55" stroke-width="0.9"/>
<circle cx="638.2" cy="578.7" r="7.2" fill="url(#ball)" stroke="#cfe6ec" stroke-opacity="0.55" stroke-width="0.9"/>
<circle cx="654.8" cy="554.8" r="7.2" fill="url(#ball)" stroke="#cfe6ec" stroke-opacity="0.55" stroke-width="0.9"/>
<circle cx="671.4" cy="527.6" r="7.2" fill="url(#ball)" stroke="#cfe6ec" stroke-opacity="0.55" stroke-width="0.9"/>
<circle cx="688.0" cy="554.8" r="7.2" fill="url(#ball)" stroke="#cfe6ec" stroke-opacity="0.55" stroke-width="0.9"/>
<circle cx="704.6" cy="565.1" r="7.2" fill="url(#ball)" stroke="#cfe6ec" stroke-opacity="0.55" stroke-width="0.9"/>
<circle cx="721.2" cy="599.1" r="7.2" fill="url(#ball)" stroke="#cfe6ec" stroke-opacity="0.55" stroke-width="0.9"/>
<polygon points="737.82,605.55 739.65,610.82 745.24,610.94 740.79,614.31 742.40,619.66 737.82,616.47 733.24,619.66 734.85,614.31 730.40,610.94 735.99,610.82" fill="#ff0000"/>
<circle cx="754.4" cy="592.3" r="7.2" fill="url(#ball)" stroke="#cfe6ec" stroke-opacity="0.55" stroke-width="0.9"/>
<circle cx="771.0" cy="558.2" r="7.2" fill="url(#ball)" stroke="#cfe6ec" stroke-opacity="0.55" stroke-width="0.9"/>
<circle cx="787.6" cy="551.4" r="7.2" fill="url(#ball)" stroke="#cfe6ec" stroke-opacity="0.55" stroke-width="0.9"/>
<circle cx="804.2" cy="585.5" r="7.2" fill="url(#ball)" stroke="#cfe6ec" stroke-opacity="0.55" stroke-width="0.9"/>
<circle cx="820.8" cy="585.5" r="7.2" fill="url(#ball)" stroke="#cfe6ec" stroke-opacity="0.55" stroke-width="0.9"/>
<circle cx="837.4" cy="537.8" r="7.2" fill="url(#ball)" stroke="#cfe6ec" stroke-opacity="0.55" stroke-width="0.9"/>
<circle cx="854.0" cy="469.7" r="7.2" fill="url(#ball)" stroke="#cfe6ec" stroke-opacity="0.55" stroke-width="0.9"/>
<circle cx="870.6" cy="469.7" r="7.2" fill="url(#ball)" stroke="#cfe6ec" stroke-opacity="0.55" stroke-width="0.9"/>
<circle cx="887.2" cy="500.3" r="7.2" fill="url(#ball)" stroke="#cfe6ec" stroke-opacity="0.55" stroke-width="0.9"/>
<rect x="320.4" y="592.3" width="37" height="26" fill="#f6f6fa" stroke="#9a9a9e" stroke-width="1"/>
<text x="339" y="610" font-size="12.4" fill="#808086" text-anchor="middle" textLength="22.5" lengthAdjust="spacingAndGlyphs">0.55</text>
<rect x="908.6" y="425.3" width="19.899999999999977" height="225.49999999999994" rx="2.5" fill="url(#sbv)" stroke="#e2e5e9" stroke-width="1"/>
<path d="M913.9 436.9 L923.1 436.9 L918.5 431.7 Z" fill="#4f5b69"/>
<path d="M913.9 639.2 L923.1 639.2 L918.5 644.4 Z" fill="#4f5b69"/>
<rect x="910.6" y="442.3" width="15.899999999999977" height="191.49999999999994" rx="2" fill="#f7f8fa" stroke="#a0a6ae" stroke-width="1.2"/>
<rect x="913.8000000000001" y="450.3" width="9.499999999999977" height="175.49999999999994" rx="0.5" fill="#fbfbfd" stroke="#9aa0a8" stroke-width="1"/>
<rect x="916.3" y="445.1" width="4.4" height="0.8" fill="#8f959d"/>
<rect x="916.3" y="446.9" width="4.4" height="0.8" fill="#8f959d"/>
<rect x="916.3" y="628.4" width="4.4" height="0.8" fill="#8f959d"/>
<rect x="916.3" y="630.2" width="4.4" height="0.8" fill="#8f959d"/>
<rect x="87.5" y="678.4" width="820.8" height="18.399999999999977" rx="2.5" fill="url(#sbh)" stroke="#e2e5e9" stroke-width="1"/>
<path d="M99.1 683.0 L99.1 692.2 L93.9 687.6 Z" fill="#4f5b69"/>
<path d="M896.7 683.0 L896.7 692.2 L901.9 687.6 Z" fill="#4f5b69"/>
<rect x="104.5" y="680.4" width="786.8" height="14.399999999999977" rx="2" fill="#f7f8fa" stroke="#a0a6ae" stroke-width="1.2"/>
<rect x="112.5" y="683.6" width="770.8" height="7.999999999999977" rx="0.5" fill="#fbfbfd" stroke="#9aa0a8" stroke-width="1"/>
<rect x="107.3" y="685.4" width="0.8" height="4.4" fill="#8f959d"/>
<rect x="109.1" y="685.4" width="0.8" height="4.4" fill="#8f959d"/>
<rect x="885.9" y="685.4" width="0.8" height="4.4" fill="#8f959d"/>
<rect x="887.7" y="685.4" width="0.8" height="4.4" fill="#8f959d"/>
<text x="487.5" y="722" font-size="16.6" fill="#3333ff" text-anchor="middle" textLength="362.7" lengthAdjust="spacingAndGlyphs">CO2: individual points over moving avg (waterfall)</text>
<rect x="746.4" y="735.6" width="178.6" height="64" rx="4" fill="url(#leg)" stroke="#c9ccd4" stroke-width="1.1"/>
<rect x="751.3" y="753.4" width="30.8" height="1.8" fill="#4f9fb2"/>
<circle cx="766.8" cy="754.3" r="7.3" fill="url(#ball)" stroke="#cfe6ec" stroke-opacity="0.55" stroke-width="0.9"/>
<text x="788" y="758.9" font-size="12.3" fill="#2e2e33" text-anchor="start" textLength="83.8" lengthAdjust="spacingAndGlyphs">Carbon Dioxide</text>
<rect x="751.3" y="780.4" width="30.8" height="1.8" fill="#4f9fb2"/>
<circle cx="766.8" cy="781.3" r="7.3" fill="url(#ball)" stroke="#cfe6ec" stroke-opacity="0.55" stroke-width="0.9"/>
<text x="788" y="785.9" font-size="12.3" fill="#2e2e33" text-anchor="start" textLength="126.5" lengthAdjust="spacingAndGlyphs">Carbon Dioxide (mAvg)</text>
</svg>
</body></html>
